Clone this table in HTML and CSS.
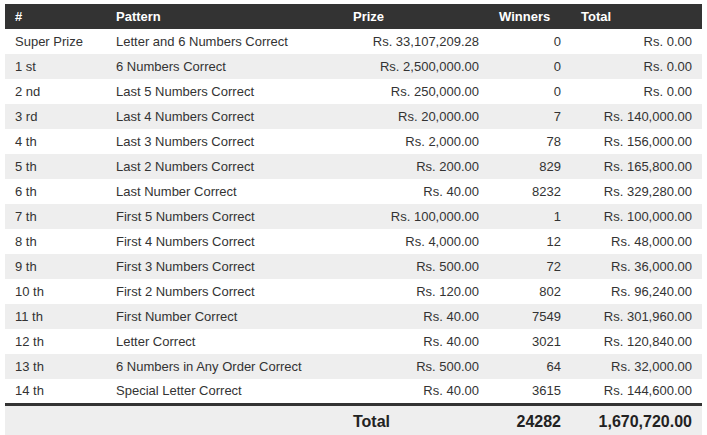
FILE: index.html
```html
<!DOCTYPE html>
<html>
<head>
<meta charset="utf-8">
<link rel="stylesheet" href="styles.css">
</head>
<body>
<div class="wrap">
<table class="prizes">
<colgroup>
<col class="c1"><col class="c2"><col class="c3"><col class="c4"><col class="c5">
</colgroup>
<thead>
<tr><th>#</th><th>Pattern</th><th>Prize</th><th>Winners</th><th>Total</th></tr>
</thead>
<tbody>
<tr><td>Super Prize</td><td>Letter and 6 Numbers Correct</td><td class="r">Rs. 33,107,209.28</td><td class="r">0</td><td class="r">Rs. 0.00</td></tr>
<tr><td>1 st</td><td>6 Numbers Correct</td><td class="r">Rs. 2,500,000.00</td><td class="r">0</td><td class="r">Rs. 0.00</td></tr>
<tr><td>2 nd</td><td>Last 5 Numbers Correct</td><td class="r">Rs. 250,000.00</td><td class="r">0</td><td class="r">Rs. 0.00</td></tr>
<tr><td>3 rd</td><td>Last 4 Numbers Correct</td><td class="r">Rs. 20,000.00</td><td class="r">7</td><td class="r">Rs. 140,000.00</td></tr>
<tr><td>4 th</td><td>Last 3 Numbers Correct</td><td class="r">Rs. 2,000.00</td><td class="r">78</td><td class="r">Rs. 156,000.00</td></tr>
<tr><td>5 th</td><td>Last 2 Numbers Correct</td><td class="r">Rs. 200.00</td><td class="r">829</td><td class="r">Rs. 165,800.00</td></tr>
<tr><td>6 th</td><td>Last Number Correct</td><td class="r">Rs. 40.00</td><td class="r">8232</td><td class="r">Rs. 329,280.00</td></tr>
<tr><td>7 th</td><td>First 5 Numbers Correct</td><td class="r">Rs. 100,000.00</td><td class="r">1</td><td class="r">Rs. 100,000.00</td></tr>
<tr><td>8 th</td><td>First 4 Numbers Correct</td><td class="r">Rs. 4,000.00</td><td class="r">12</td><td class="r">Rs. 48,000.00</td></tr>
<tr><td>9 th</td><td>First 3 Numbers Correct</td><td class="r">Rs. 500.00</td><td class="r">72</td><td class="r">Rs. 36,000.00</td></tr>
<tr><td>10 th</td><td>First 2 Numbers Correct</td><td class="r">Rs. 120.00</td><td class="r">802</td><td class="r">Rs. 96,240.00</td></tr>
<tr><td>11 th</td><td>First Number Correct</td><td class="r">Rs. 40.00</td><td class="r">7549</td><td class="r">Rs. 301,960.00</td></tr>
<tr><td>12 th</td><td>Letter Correct</td><td class="r">Rs. 40.00</td><td class="r">3021</td><td class="r">Rs. 120,840.00</td></tr>
<tr><td>13 th</td><td>6 Numbers in Any Order Correct</td><td class="r">Rs. 500.00</td><td class="r">64</td><td class="r">Rs. 32,000.00</td></tr>
<tr><td>14 th</td><td>Special Letter Correct</td><td class="r">Rs. 40.00</td><td class="r">3615</td><td class="r">Rs. 144,600.00</td></tr>
</tbody>
<tfoot>
<tr><td></td><td></td><td>Total</td><td class="r">24282</td><td class="r">1,670,720.00</td></tr>
</tfoot>
</table>
</div>
</body>
</html>
```
FILE: styles.css
```css
html, body { margin: 0; padding: 0; background: #fff; }
.wrap { padding: 4px 5px 0 5px; }
.prizes {
  width: 697px;
  border-collapse: collapse;
  font-family: "Liberation Sans", Arial, sans-serif;
  font-size: 13px;
  color: #333;
  table-layout: fixed;
}
.c1 { width: 101px; }
.c2 { width: 237px; }
.c3 { width: 146px; }
.c4 { width: 82px; }
.c5 { width: 131px; }
.prizes th, .prizes td {
  height: 25px;
  padding: 0 10px;
  box-sizing: border-box;
  text-align: left;
  white-space: nowrap;
}
.prizes thead th {
  background: #333;
  color: #fff;
  font-weight: bold;
}
.prizes tbody tr:nth-child(even) td { background: #eee; }
.prizes td.r { text-align: right; }
.prizes tfoot td {
  background: #eee;
  border-top: 3px solid #333;
  height: 35px;
  font-weight: bold;
  font-size: 16px;
  color: #222;
}
```
